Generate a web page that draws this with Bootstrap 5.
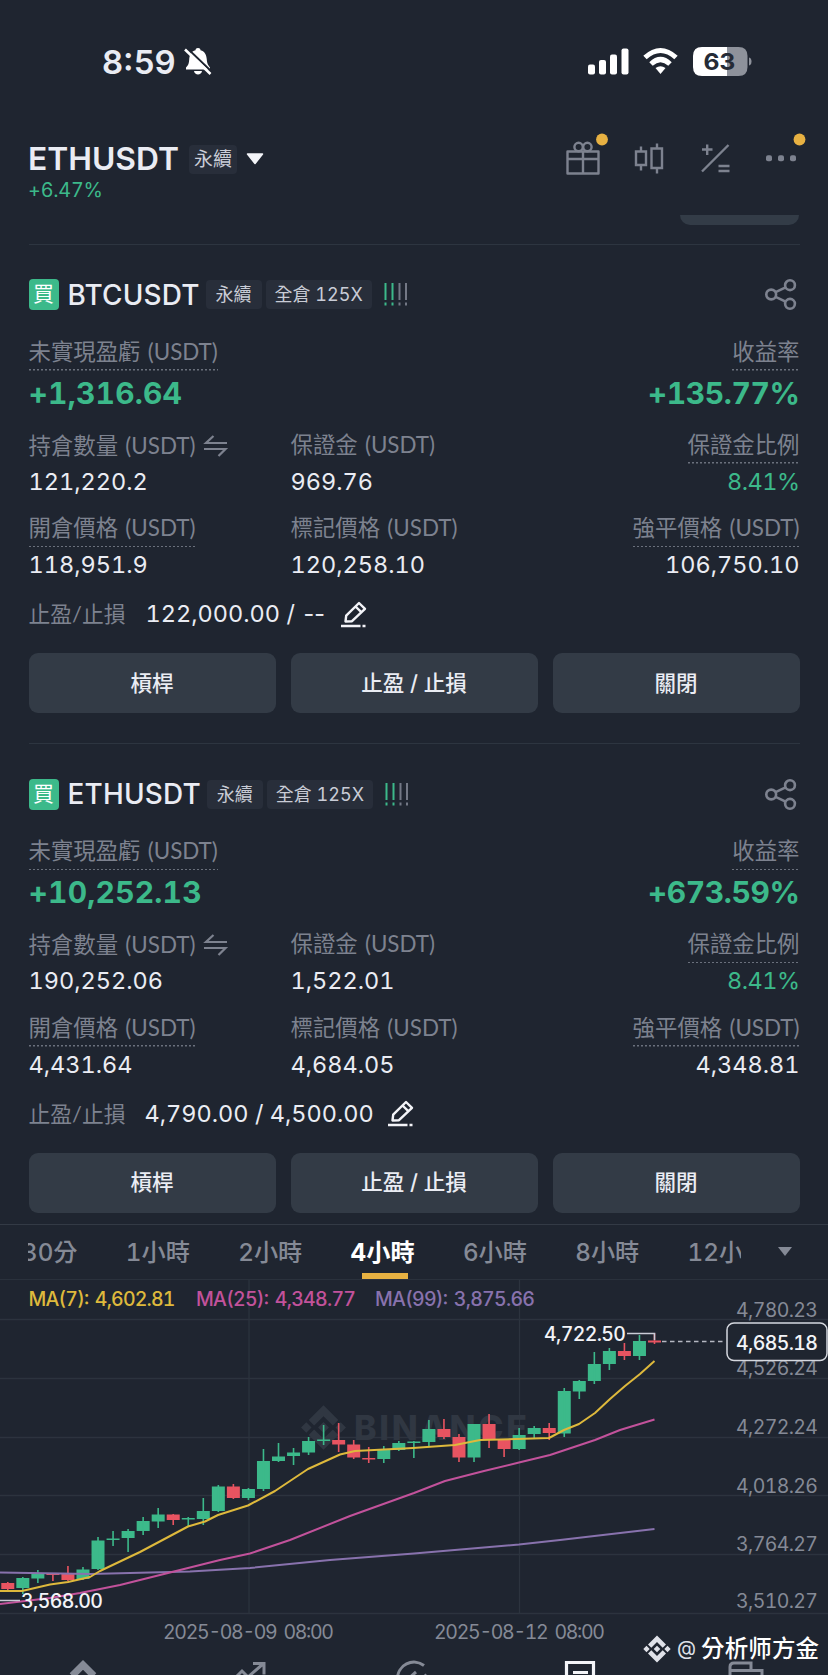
<!DOCTYPE html>
<html lang="zh-Hant" data-bs-theme="dark">
<head>
<meta charset="utf-8">
<meta name="viewport" content="width=device-width, initial-scale=1">
<title>ETHUSDT 永續</title>
<link rel="stylesheet" href="https://cdn.jsdelivr.net/npm/bootstrap@5.3.0/dist/css/bootstrap.min.css">
<style>
:root{--bg:#1f2530;--line:#2d3540;--muted:#7d828f;--fg:#eaecf3;--up:#3cb98a;--down:#e85461;--gold:#e7b142}
body{background:var(--bg);color:var(--fg);font-family:Inter,"Noto Sans CJK TC",sans-serif;font-variant-numeric:tabular-nums;width:828px;height:1675px;overflow:hidden}
svg{display:block;flex:none;overflow:visible}
.statusbar{height:122px;padding:0 77px 0 102px}
.clock{font-size:33px;font-weight:600;line-height:1;font-variant-numeric:normal;padding-top:2px}
.topbar{height:93px;padding:0 28px}
.sym{font-size:31.8px;font-weight:600;line-height:34px}
.tag{background:#282e3a;border-radius:4px;color:#c9ccd6;line-height:29px;height:29px}
.chg{color:var(--up);font-size:19.8px;line-height:24px;letter-spacing:-.2px;margin-top:2px}
.peek{width:119px;height:10px;margin-right:29px;background:#333c47;border-radius:0 0 10px 10px}
.pos{height:499.5px;margin:0 28.5px;border-top:1.5px solid var(--line)}
.pos-head{height:50px;margin-top:25px}
.buy{width:30px;height:31px;border-radius:4px;background:#3cb98a;color:#fff;font-size:21px;line-height:30px;text-align:center}
.pair{font-size:27.9px;font-weight:500;line-height:34px;letter-spacing:.2px}
.lbl{font-family:Lato,"Noto Sans CJK TC",sans-serif;color:var(--muted);font-size:22.4px;line-height:34px;height:36px;margin-bottom:-1px;width:max-content;word-spacing:1.5px;white-space:nowrap}
.hint{background:repeating-linear-gradient(90deg,#6a707c 0 2px,transparent 2px 4px) left bottom/100% 1.5px no-repeat}
.amt{font-size:30px;font-weight:700;color:var(--up);line-height:46px;height:46px;letter-spacing:.2px}
.text-end .amt{letter-spacing:-.4px}
.val{font-size:23.5px;line-height:38px;height:38px;white-space:nowrap}
.ratio{color:var(--up);letter-spacing:-.5px}
.none{letter-spacing:-4.5px}
.cols{display:grid;grid-template-columns:262px 262px 1fr}
.tpsl{height:58px}
.tpsl .lbl{font-size:21.8px;margin:0;height:34px;line-height:34px}
.act{height:60px;background:#333b46;border:0;border-radius:9px;color:var(--fg);font-size:21.5px;font-weight:500;padding:0}
.acts{gap:15px;margin-top:10px}
.frames{height:56.5px;border-top:1.5px solid #333a45;border-bottom:1.5px solid #2a313c;padding-left:28px}
.strip{width:713px;gap:48.3px;font-size:24.2px;font-weight:500;color:#858a96;line-height:54px;white-space:nowrap;overflow:hidden}
.strip span{flex:none;padding-top:1px;height:54px}
.strip .on{color:#fff;font-weight:700;position:relative}
.strip .on::after{content:"";position:absolute;left:11px;bottom:0;width:46px;height:6px;background:var(--gold)}
.chart text{font-family:Inter,"Noto Sans CJK SC",sans-serif}
</style>
</head>
<body>
<svg width="0" height="0" class="position-absolute">
  <defs>
    <g id="diamond"><path d="M0-13.5 -9-4.5 -5.7-1.2 0-6.9 5.7-1.2 9-4.5Z M0 13.5 -9 4.5 -5.7 1.2 0 6.9 5.7 1.2 9 4.5Z M0-3.3 3.3 0 0 3.3 -3.3 0Z M-10.5-3.2 -7.3 0 -10.5 3.2 -13.7 0Z M10.5-3.2 13.7 0 10.5 3.2 7.3 0Z"/></g>
    <g id="share" fill="none" stroke="#7d828f" stroke-width="2.6"><circle cx="6.2" cy="15.5" r="4.9"/><circle cx="25" cy="6.2" r="4.9"/><circle cx="25" cy="24.8" r="4.9"/><path d="M10.6 13.2 20.6 8.3M10.6 17.8 20.6 22.7"/></g>
    <g id="swap" fill="none" stroke="#7d828f" stroke-width="2.2"><path d="M23 8H2L9.5 1M0 14H21.5L14.5 21"/></g>
    <g id="edit" fill="none" stroke="#f3f4f8" stroke-width="2.4"><path d="M4.5 20.5 5.2 14.6 18 2 24 7.8 11 20.2Z M14.5 5.5 20.3 11.2" stroke-linejoin="round"/><path d="M0 25H19.5M21.5 25H24.5"/></g>
    <g id="risk" fill="none" stroke-width="2"><path stroke="#3cb98a" d="M1.5 0V17M1.5 19.500V22.500M8.500 0V17M8.500 19.500V22.500"/><path stroke="#737885" d="M15.500 0V17M15.500 19.500V22.500M22 0V17M22 19.500V22.500"/></g>
  </defs>
</svg>

<header class="statusbar d-flex justify-content-between align-items-center">
  <div class="d-flex align-items-center">
    <span class="clock">8:59</span>
    <svg class="ms-2" width="28" height="29" viewBox="0 0 28 29" fill="#fff"><path d="M14 1C16 1 16.500 2.300 16.500 3.200 21 4.500 22.500 8 22.800 12.500 23 17 24.500 18.500 26 20.500V22.500H2V20.500C4 18.500 5 17 5.200 12.500 5.500 8 7 4.500 11.500 3.200 11.500 2.300 12 1 14 1Z"/><path d="M10 24H18C17.500 28.500 10.500 28.500 10 24Z"/><path d="M3.200 1.200 28 25" stroke="#1f2530" stroke-width="2"/><path d="M1 2.500 26.500 27" stroke="#fff" stroke-width="2.600"/></svg>
  </div>
  <svg width="164" height="30" viewBox="0 0 164 30" fill="#fff">
    <rect x="1" y="18.500" width="7" height="10" rx="2"/><rect x="12" y="14" width="7" height="14.500" rx="2"/><rect x="23" y="8.500" width="7" height="20" rx="2"/><rect x="34.500" y="2.500" width="7" height="26" rx="2"/>
    <g fill="none" stroke="#fff" stroke-width="5"><path d="M58 11.500Q73.500-2.500 89 11.500"/><path d="M64 18Q73.500 9 83 18"/></g><path d="M68.500 22Q73.500 18.500 78.500 22L73.500 28Z"/>
    <path d="M115 1H140V30H115Q106 30 106 21V10Q106 1 115 1Z"/><path d="M140 1H151.500Q160.500 1 160.500 10V21Q160.500 30 151.500 30H140Z" fill="#8e929b"/><path d="M162 11.500Q164.500 12 164.500 15.500T162 19.500Z" fill="#8e929b"/>
    <text x="116.500" y="23.800" font-size="23.500" font-weight="700" fill="#252b36" textLength="32" lengthAdjust="spacingAndGlyphs">63</text>
  </svg>
</header>

<section class="topbar d-flex justify-content-between">
  <div class="pt-1">
    <div class="d-flex align-items-center" style="padding-top:16px">
      <span class="sym">ETHUSDT</span>
      <span class="tag text-center" style="font-size:19px;margin-left:10px;width:48px">永續</span>
      <svg class="ms-2" width="20" height="14" viewBox="0 0 20 14"><path d="M2.500 2H17.500L10 11.500Z" fill="#f3f4f8" stroke="#f3f4f8" stroke-width="1.500" stroke-linejoin="round"/></svg>
    </div>
    <div class="chg">+6.47%</div>
  </div>
  <svg width="236" height="60" viewBox="0 0 236 60" style="margin-top:8px" fill="none" stroke="#7d828f" stroke-width="2.400">
    <path d="M3.500 21.500H34.500V43.500H3.500ZM3.500 29H34.500M19 21.500V43.500" stroke-linejoin="round"/><circle cx="14.600" cy="17" r="4.200"/><circle cx="23.400" cy="17" r="4.200"/>
    <path d="M72 21.500H82V35H72ZM87.500 18.500H98V38H87.500ZM77 16.500V21.500M77 35V40.500M93 13.500V18.500M93 38V43.500"/>
    <path d="M138 41.500 164.500 15M138 19.500H148.500M143.200 14.500V25M154.500 36H165.500M154.500 41H165.500"/>
    <g fill="#7d828f" stroke="none"><rect x="202" y="25.200" width="6" height="6" rx="2"/><rect x="214" y="25.200" width="6" height="6" rx="2"/><rect x="226" y="25.200" width="6" height="6" rx="2"/></g>
    <g fill="#e7b142" stroke="none"><circle cx="38" cy="9.500" r="5.900"/><circle cx="235.500" cy="9.500" r="5.900"/></g>
  </svg>
</section>
<div class="peek ms-auto"></div>
<div style="height:18.500px"></div>

<main>
  <section class="pos">
    <div class="pos-head d-flex align-items-center">
      <span class="buy">買</span><span class="pair" style="margin-left:9px">BTCUSDT</span>
      <span class="tag text-center" style="font-size:18px;width:56px;margin-left:6px">永續</span>
      <span class="tag text-center" style="font-size:18px;width:106px;margin-left:4px">全倉 125X</span>
      <svg style="margin-left:12px" width="24" height="23"><use href="#risk"/></svg>
      <svg class="ms-auto me-1" width="31" height="31"><use href="#share"/></svg>
    </div>
    <div class="d-flex justify-content-between" style="margin-top:15px">
      <div><div class="lbl hint">未實現盈虧 (USDT)</div><div class="amt">+1,316.64</div></div>
      <div class="text-end"><div class="lbl hint ms-auto">收益率</div><div class="amt">+135.77%</div></div>
    </div>
    <div class="cols" style="margin-top:12px">
      <div><div class="lbl d-flex align-items-center">持倉數量 (USDT)<svg style="margin-left:9px" width="24" height="22"><use href="#swap"/></svg></div><div class="val">121,220.2</div></div>
      <div><div class="lbl">保證金 (USDT)</div><div class="val">969.76</div></div>
      <div class="text-end"><div class="lbl hint ms-auto">保證金比例</div><div class="val ratio">8.41%</div></div>
    </div>
    <div class="cols" style="margin-top:10.500px">
      <div><div class="lbl hint">開倉價格 (USDT)</div><div class="val">118,951.9</div></div>
      <div><div class="lbl">標記價格 (USDT)</div><div class="val">120,258.10</div></div>
      <div class="text-end"><div class="lbl hint ms-auto">強平價格 (USDT)</div><div class="val">106,750.10</div></div>
    </div>
    <div class="tpsl d-flex align-items-center" style="margin-top:1px">
      <span class="lbl">止盈/止損</span><span class="val" style="margin-left:20px">122,000.00 / <span class="none">--</span></span>
      <svg style="margin-left:18px" width="25" height="27"><use href="#edit"/></svg>
    </div>
    <div class="acts d-flex"><button class="btn act flex-fill w-100">槓桿</button><button class="btn act flex-fill w-100">止盈 / 止損</button><button class="btn act flex-fill w-100">關閉</button></div>
  </section>

  <section class="pos" style="height:480.500px">
    <div class="pos-head d-flex align-items-center">
      <span class="buy">買</span><span class="pair" style="margin-left:9px">ETHUSDT</span>
      <span class="tag text-center" style="font-size:18px;width:56px;margin-left:6px">永續</span>
      <span class="tag text-center" style="font-size:18px;width:106px;margin-left:4px">全倉 125X</span>
      <svg style="margin-left:12px" width="24" height="23"><use href="#risk"/></svg>
      <svg class="ms-auto me-1" width="31" height="31"><use href="#share"/></svg>
    </div>
    <div class="d-flex justify-content-between" style="margin-top:15px">
      <div><div class="lbl hint">未實現盈虧 (USDT)</div><div class="amt">+10,252.13</div></div>
      <div class="text-end"><div class="lbl hint ms-auto">收益率</div><div class="amt">+673.59%</div></div>
    </div>
    <div class="cols" style="margin-top:12px">
      <div><div class="lbl d-flex align-items-center">持倉數量 (USDT)<svg style="margin-left:9px" width="24" height="22"><use href="#swap"/></svg></div><div class="val">190,252.06</div></div>
      <div><div class="lbl">保證金 (USDT)</div><div class="val">1,522.01</div></div>
      <div class="text-end"><div class="lbl hint ms-auto">保證金比例</div><div class="val ratio">8.41%</div></div>
    </div>
    <div class="cols" style="margin-top:10.500px">
      <div><div class="lbl hint">開倉價格 (USDT)</div><div class="val">4,431.64</div></div>
      <div><div class="lbl">標記價格 (USDT)</div><div class="val">4,684.05</div></div>
      <div class="text-end"><div class="lbl hint ms-auto">強平價格 (USDT)</div><div class="val">4,348.81</div></div>
    </div>
    <div class="tpsl d-flex align-items-center" style="margin-top:1px">
      <span class="lbl">止盈/止損</span><span class="val" style="margin-left:19px">4,790.00 / 4,500.00</span>
      <svg style="margin-left:14px" width="25" height="27"><use href="#edit"/></svg>
    </div>
    <div class="acts d-flex"><button class="btn act flex-fill w-100">槓桿</button><button class="btn act flex-fill w-100">止盈 / 止損</button><button class="btn act flex-fill w-100">關閉</button></div>
  </section>
</main>

<nav class="frames d-flex align-items-center">
  <div class="strip d-flex"><span style="margin-left:-6px">30分</span><span>1小時</span><span>2小時</span><span class="on">4小時</span><span>6小時</span><span>8小時</span><span>12小時</span></div>
  <svg style="margin-left:37px" width="14" height="9"><path d="M0 0H14L7 9Z" fill="#858a96"/></svg>
</nav>

<svg class="chart" width="828" height="395" viewBox="0 1280 828 395">
  <path d="M0 1319.500H828M0 1378.500H828M0 1437.500H828M0 1495.500H828M0 1554.500H828M0 1613.500H828M249 1280V1613M519.500 1280V1613" stroke="#2c333e" stroke-width="1.300" fill="none"/>
  <g fill="#303742"><use href="#diamond" transform="translate(323.500 1427.500) scale(1.640)"/><text x="354" y="1439.500" font-size="34" font-weight="800" textLength="173">BINANCE</text></g>
  <g id="candles"></g>
  <g fill="none" stroke-width="2" stroke-linejoin="round">
    <path stroke="#8872ad" d="M0 1572.500 90 1574 190 1571.500 250 1568 330 1560 414 1553.500 519 1544.500 560 1540 654.500 1529"/>
    <path stroke="#c2529b" d="M0 1604 50 1598 80 1593 120 1585 160 1575 220 1560 250 1553.500 290 1540 350 1516 414 1493 445 1481 484 1471 519 1462.500 550 1455 595 1440 620 1430 654.500 1419.500"/>
    <path stroke="#deb93c" d="M0 1591H22L50 1584.500 68 1582 90 1577 100 1571 140 1552 188 1526.500 205 1521.500 218 1515 248 1505.500 275 1491 308 1469 340 1454.500 355 1451 413 1448 455 1445 480 1440 500 1439.500 549 1438 564 1430 579 1424 595 1413 610 1399 625 1386 640 1374 654.500 1361"/>
  </g>
  <g font-size="19.500" font-weight="500" word-spacing="2">
    <text x="28.500" y="1305.500" fill="#deb93c" textLength="147">MA(7): 4,602.81</text>
    <text x="196" y="1305.500" fill="#c2529b" textLength="160">MA(25): 4,348.77</text>
    <text x="375" y="1305.500" fill="#8872ad" textLength="160">MA(99): 3,875.66</text>
  </g>
  <path d="M627 1333.500H654.500V1340M0 1600.500H20" stroke="#c9ccd6" stroke-width="1.500" fill="none"/>
  <path d="M662 1341.500H726" stroke="#b5b8c1" stroke-width="1.500" stroke-dasharray="4.500 3.500" fill="none"/>
  <g font-size="19.500" fill="#f3f4f8" font-weight="500"><text x="544" y="1340.500" textLength="82">4,722.50</text><text x="21" y="1608" textLength="82">3,568.00</text></g>
  <g font-size="19.500" fill="#858a96">
    <text x="736" y="1316.500" textLength="82">4,780.23</text><text x="736" y="1375" textLength="82">4,526.24</text><text x="736" y="1433.500" textLength="82">4,272.24</text><text x="736" y="1492.500" textLength="82">4,018.26</text><text x="736" y="1551" textLength="82">3,764.27</text><text x="736" y="1608" textLength="82">3,510.27</text>
    <text x="163" y="1638.500" word-spacing="3" textLength="171">2025-08-09 08:00</text><text x="434" y="1638.500" word-spacing="3" textLength="171">2025-08-12 08:00</text>
  </g>
  <rect x="727" y="1323" width="100" height="37.500" rx="7" fill="#1f2530" stroke="#d5d8df" stroke-width="1.500"/>
  <text x="736" y="1349.500" font-size="19.500" font-weight="500" fill="#f3f4f8" textLength="82">4,685.18</text>
  <!-- bottom navigation -->
  <g fill="#858a96"><use href="#diamond" transform="translate(83 1680) scale(1.480)"/></g>
  <g fill="none" stroke="#858a96" stroke-width="3">
    <path d="M236 1677 242 1671 248 1677 263 1664M253 1663.500H264V1674.500"/>
    <path d="M397.500 1679A16.500 16.500 0 0 1 424 1665.500M408 1679 416 1672" /><path d="M424 1675 434 1684" stroke-width="4" stroke-dasharray="4 3"/>
    <path d="M730 1680V1667Q730 1663 734 1663H751V1670M730 1670.500H762V1680"/>
    <path d="M566.500 1680V1662.500H593.500V1680M573 1672.500H588" stroke="#f3f4f8" stroke-width="3.200"/>
  </g>
  <g fill="#dfe1e8"><use href="#diamond" transform="translate(657 1649)"/><text x="677" y="1655" font-size="20" textLength="19" lengthAdjust="spacingAndGlyphs">@</text><text x="701" y="1657" font-size="23.500" font-weight="500" fill="#fff" textLength="118">分析师方金</text></g>
</svg>

<script src="https://cdn.jsdelivr.net/npm/bootstrap@5.3.0/dist/js/bootstrap.bundle.min.js"></script>
<script>
// direction, body top, body bottom, wick top, wick bottom
const candles = [
[0,1583,1589,1582,1590],[1,1578,1588,1577,1594],[1,1573.5,1578.5,1570,1583],[0,1573.5,1575,1573,1581],[0,1574,1580,1566,1581],[1,1569.5,1579,1567,1580],
[1,1540.5,1569,1537,1570],[1,1538.5,1540,1531,1546],[1,1531,1538,1529,1552],[1,1521,1531,1517,1535],[1,1514.5,1521.5,1508,1528],[0,1514.5,1520,1514,1525],
[1,1518,1519.5,1517,1526],[1,1511,1519,1498,1525],[1,1486.5,1511,1485,1512],[0,1486.5,1498,1484,1499],[1,1489,1498,1488,1500],[1,1461,1489,1449,1491],
[1,1456.5,1461,1443,1462],[1,1452.5,1456,1448,1465],[1,1441,1452.5,1437,1455],[1,1439.5,1441,1425,1445],[0,1440,1444.5,1423,1452],[0,1444.5,1457.5,1440,1459],
[0,1458,1459.5,1447,1463],[1,1449.5,1459,1446,1463],[1,1443,1450,1441,1451],[1,1441.5,1443,1441,1458],[1,1429,1442,1420,1447],[0,1429,1437,1419,1439],
[0,1437,1457.5,1434,1462],[1,1424,1457.5,1424,1462],[0,1424,1439.5,1414,1448],[0,1440,1449,1440,1457],[1,1435,1449,1428,1450],[1,1428,1434,1426,1438],
[0,1428,1433,1423,1440],[1,1391,1433.5,1388,1437],[1,1381,1391.5,1380,1399],[1,1364,1381,1352,1384],[1,1351,1364,1348,1370],[0,1351,1356,1343,1360],
[1,1341,1356,1335,1360],[0,1340.5,1342.5,1333,1344]];
document.getElementById('candles').innerHTML = candles.map(([up,t,b,h,l],i)=>{
  const x = 654.5 - (candles.length-1-i)*15.04;
  return `<g fill="${up?'#3cb98a':'#e85461'}"><rect x="${x-6.5}" y="${t}" width="13" height="${b-t}"/><rect x="${x-.8}" y="${h}" width="1.6" height="${l-h}"/></g>`;
}).join('');
</script>
</body>
</html>
